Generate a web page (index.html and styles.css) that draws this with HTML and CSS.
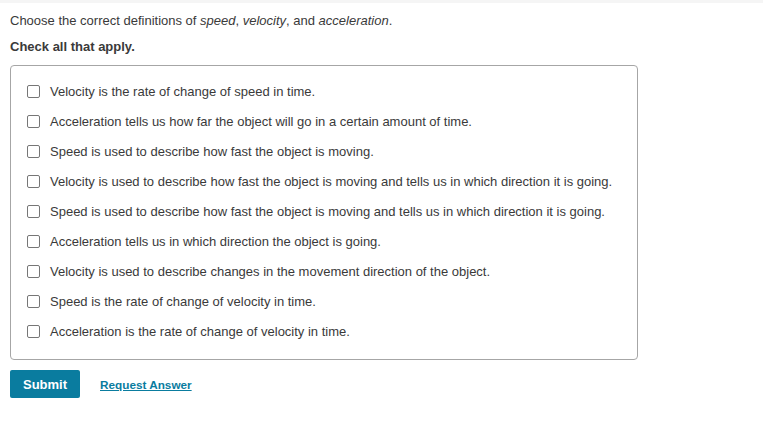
FILE: index.html
```html
<!DOCTYPE html>
<html>
<head>
<meta charset="utf-8">
<link rel="stylesheet" href="styles.css">
</head>
<body>
<div class="topbar"></div>
<main class="content">
  <p class="intro">Choose the correct definitions of <em>speed</em>, <em>velocity</em>, and <em>acceleration</em>.</p>
  <p class="instr">Check all that apply.</p>
  <div class="options">
    <label class="opt"><span class="box"></span><span>Velocity is the rate of change of speed in time.</span></label>
    <label class="opt"><span class="box"></span><span>Acceleration tells us how far the object will go in a certain amount of time.</span></label>
    <label class="opt"><span class="box"></span><span>Speed is used to describe how fast the object is moving.</span></label>
    <label class="opt"><span class="box"></span><span>Velocity is used to describe how fast the object is moving and tells us in which direction it is going.</span></label>
    <label class="opt"><span class="box"></span><span>Speed is used to describe how fast the object is moving and tells us in which direction it is going.</span></label>
    <label class="opt"><span class="box"></span><span>Acceleration tells us in which direction the object is going.</span></label>
    <label class="opt"><span class="box"></span><span>Velocity is used to describe changes in the movement direction of the object.</span></label>
    <label class="opt"><span class="box"></span><span>Speed is the rate of change of velocity in time.</span></label>
    <label class="opt"><span class="box"></span><span>Acceleration is the rate of change of velocity in time.</span></label>
  </div>
  <div class="actions">
    <button class="submit">Submit</button>
    <a class="link" href="#">Request Answer</a>
  </div>
</main>
</body>
</html>
```
FILE: styles.css
```css
html, body {
  margin: 0;
  padding: 0;
  background: #fff;
}
body {
  font-family: "Liberation Sans", Arial, sans-serif;
  font-size: 13px;
  color: #3a3a3a;
}
.topbar {
  height: 3px;
  background: #f5f5f5;
}
.content {
  padding: 10px 0 0 10px;
}
.intro {
  margin: 0;
  line-height: 15px;
}
.intro em {
  font-style: italic;
}
.instr {
  margin: 11px 0 0 0;
  line-height: 15px;
  font-weight: bold;
  font-size: 13px;
}
.options {
  margin-top: 11px;
  width: 626px;
  border: 1px solid #a6a6a6;
  border-radius: 4px;
  padding: 10px 0 13px 0;
  display: flex;
  flex-direction: column;
}
.opt {
  display: flex;
  align-items: center;
  height: 30px;
  padding-left: 16px;
  gap: 10px;
}
.box {
  width: 11px;
  height: 11px;
  border: 1px solid #767676;
  border-radius: 2px;
  flex: none;
}
.actions {
  margin-top: 10px;
  display: flex;
  align-items: center;
  gap: 20px;
}
.submit {
  width: 70px;
  height: 28px;
  border: none;
  border-radius: 2px;
  background: #0a7c9f;
  color: #fff;
  font-family: "Liberation Sans", Arial, sans-serif;
  font-size: 13px;
  font-weight: bold;
  padding: 0;
}
.link {
  color: #0a7c9f;
  font-weight: bold;
  font-size: 11.75px;
  text-decoration: underline;
}
```
